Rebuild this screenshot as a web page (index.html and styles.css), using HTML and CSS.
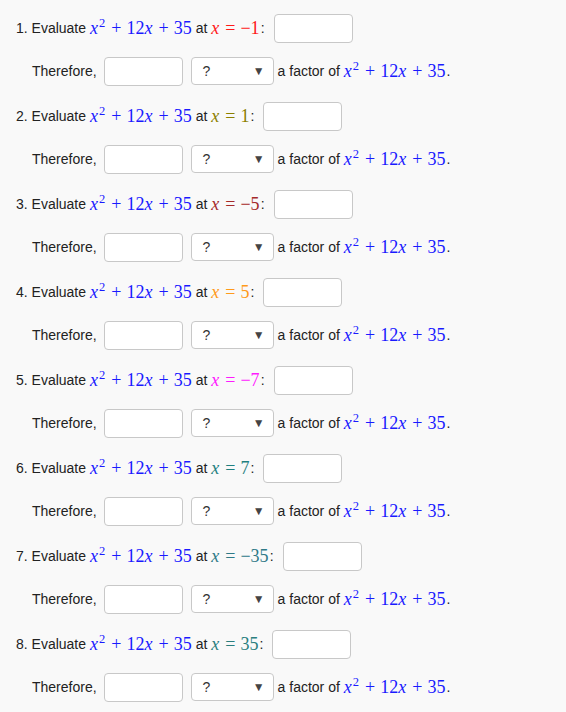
FILE: index.html
```html
<!DOCTYPE html>
<html>
<head>
<meta charset="utf-8">
<link rel="stylesheet" href="styles.css">
</head>
<body>
<div class="sheet">

<div class="item">
  <div class="row eval"><span>1. Evaluate</span><span class="m p"><i>x</i><sup>2</sup><b>+</b>12<i>x</i><b>+</b>35</span><span>at</span><span class="m c-red"><i>x</i><b>=</b>−1</span><span class="colon">:</span><span class="box"></span></div>
  <div class="row ther"><span>Therefore,</span><span class="box b2"></span><span class="sel"><span>?</span><span class="arr">▼</span></span><span class="tail">a factor of</span><span class="m p"><i>x</i><sup>2</sup><b>+</b>12<i>x</i><b>+</b>35</span><span class="dot">.</span></div>
</div>

<div class="item">
  <div class="row eval"><span>2. Evaluate</span><span class="m p"><i>x</i><sup>2</sup><b>+</b>12<i>x</i><b>+</b>35</span><span>at</span><span class="m c-olive"><i>x</i><b>=</b>1</span><span class="colon">:</span><span class="box"></span></div>
  <div class="row ther"><span>Therefore,</span><span class="box b2"></span><span class="sel"><span>?</span><span class="arr">▼</span></span><span class="tail">a factor of</span><span class="m p"><i>x</i><sup>2</sup><b>+</b>12<i>x</i><b>+</b>35</span><span class="dot">.</span></div>
</div>

<div class="item">
  <div class="row eval"><span>3. Evaluate</span><span class="m p"><i>x</i><sup>2</sup><b>+</b>12<i>x</i><b>+</b>35</span><span>at</span><span class="m c-brown"><i>x</i><b>=</b>−5</span><span class="colon">:</span><span class="box"></span></div>
  <div class="row ther"><span>Therefore,</span><span class="box b2"></span><span class="sel"><span>?</span><span class="arr">▼</span></span><span class="tail">a factor of</span><span class="m p"><i>x</i><sup>2</sup><b>+</b>12<i>x</i><b>+</b>35</span><span class="dot">.</span></div>
</div>

<div class="item">
  <div class="row eval"><span>4. Evaluate</span><span class="m p"><i>x</i><sup>2</sup><b>+</b>12<i>x</i><b>+</b>35</span><span>at</span><span class="m c-orange"><i>x</i><b>=</b>5</span><span class="colon">:</span><span class="box"></span></div>
  <div class="row ther"><span>Therefore,</span><span class="box b2"></span><span class="sel"><span>?</span><span class="arr">▼</span></span><span class="tail">a factor of</span><span class="m p"><i>x</i><sup>2</sup><b>+</b>12<i>x</i><b>+</b>35</span><span class="dot">.</span></div>
</div>

<div class="item">
  <div class="row eval"><span>5. Evaluate</span><span class="m p"><i>x</i><sup>2</sup><b>+</b>12<i>x</i><b>+</b>35</span><span>at</span><span class="m c-magenta"><i>x</i><b>=</b>−7</span><span class="colon">:</span><span class="box"></span></div>
  <div class="row ther"><span>Therefore,</span><span class="box b2"></span><span class="sel"><span>?</span><span class="arr">▼</span></span><span class="tail">a factor of</span><span class="m p"><i>x</i><sup>2</sup><b>+</b>12<i>x</i><b>+</b>35</span><span class="dot">.</span></div>
</div>

<div class="item">
  <div class="row eval"><span>6. Evaluate</span><span class="m p"><i>x</i><sup>2</sup><b>+</b>12<i>x</i><b>+</b>35</span><span>at</span><span class="m c-teal"><i>x</i><b>=</b>7</span><span class="colon">:</span><span class="box"></span></div>
  <div class="row ther"><span>Therefore,</span><span class="box b2"></span><span class="sel"><span>?</span><span class="arr">▼</span></span><span class="tail">a factor of</span><span class="m p"><i>x</i><sup>2</sup><b>+</b>12<i>x</i><b>+</b>35</span><span class="dot">.</span></div>
</div>

<div class="item">
  <div class="row eval"><span>7. Evaluate</span><span class="m p"><i>x</i><sup>2</sup><b>+</b>12<i>x</i><b>+</b>35</span><span>at</span><span class="m c-cadet"><i>x</i><b>=</b>−35</span><span class="colon">:</span><span class="box"></span></div>
  <div class="row ther"><span>Therefore,</span><span class="box b2"></span><span class="sel"><span>?</span><span class="arr">▼</span></span><span class="tail">a factor of</span><span class="m p"><i>x</i><sup>2</sup><b>+</b>12<i>x</i><b>+</b>35</span><span class="dot">.</span></div>
</div>

<div class="item">
  <div class="row eval"><span>8. Evaluate</span><span class="m p"><i>x</i><sup>2</sup><b>+</b>12<i>x</i><b>+</b>35</span><span>at</span><span class="m c-teal2"><i>x</i><b>=</b>35</span><span class="colon">:</span><span class="box"></span></div>
  <div class="row ther"><span>Therefore,</span><span class="box b2"></span><span class="sel"><span>?</span><span class="arr">▼</span></span><span class="tail">a factor of</span><span class="m p"><i>x</i><sup>2</sup><b>+</b>12<i>x</i><b>+</b>35</span><span class="dot">.</span></div>
</div>

</div>
</body>
</html>
```

FILE: styles.css
```css
html, body {
  margin: 0;
  padding: 0;
  background: #f9f9f9;
}
.sheet {
  font-family: "Liberation Sans", Arial, sans-serif;
  font-size: 14px;
  color: #222;
  padding: 13px 0 0 16px;
}
.item {
  display: flex;
  flex-direction: column;
  gap: 13px;
  margin-bottom: 15px;
}
.row {
  display: flex;
  align-items: center;
  height: 30px;
  white-space: nowrap;
}
.eval > span + span { margin-left: 4px; }
.eval > .colon { margin-left: 1px; }
.eval > .box { margin-left: 9px; }
.ther { padding-left: 16px; }
.m {
  font-family: "Liberation Serif", "Times New Roman", serif;
  font-size: 18px;
  display: inline-flex;
  align-items: baseline;
}
.m i {
  font-family: "Liberation Serif", "Times New Roman", serif;
  font-style: italic;
  margin-right: 1px;
}
.m b {
  font-family: "Liberation Serif", "Times New Roman", serif;
  font-weight: normal;
  margin: 0 5px;
}
.m sup {
  font-family: "Liberation Serif", "Times New Roman", serif;
  font-size: 12.5px;
  position: relative;
  top: -7px;
  margin-left: 0;
  margin-right: 1px;
}
.p { color: #1a1aff; }
.c-red { color: #ff1a1a; }
.c-olive { color: #8c8000; }
.c-brown { color: #a52a2a; }
.c-orange { color: #ff9a1a; }
.c-magenta { color: #ff1aff; }
.c-teal { color: #1f8080; }
.c-cadet { color: #2f7a88; }
.c-teal2 { color: #2a7f7f; }
.box {
  display: inline-block;
  box-sizing: border-box;
  width: 79px;
  height: 29px;
  background: #fff;
  border: 1px solid #c8c8c8;
  border-radius: 4px;
}
.b2 { margin-left: 7px; }
.sel {
  box-sizing: border-box;
  margin-left: 8px;
  width: 83px;
  height: 28px;
  background: #fff;
  border: 1px solid #c8c8c8;
  border-radius: 4px;
  display: flex;
  align-items: center;
  justify-content: space-between;
  padding: 0 8px 0 11px;
  font-size: 14px;
  color: #333;
}
.arr { font-size: 12px; color: #444; }
.tail { margin-left: 4px; }
.ther .m { margin-left: 4px; }
.dot { margin-left: 1px; }
```
